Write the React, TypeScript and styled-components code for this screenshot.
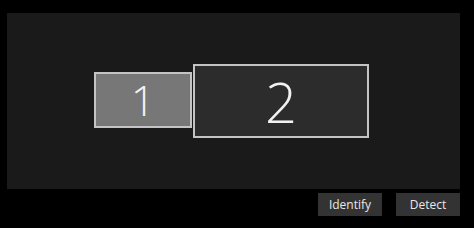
import React from 'react';
import styled, { createGlobalStyle } from 'styled-components';

const GlobalStyle = createGlobalStyle`
  html, body {
    margin: 0;
    padding: 0;
    background: #000;
  }
  body {
    font-family: 'Open Sans', 'Noto Sans', sans-serif;
    color: #fff;
  }
`;

const Page = styled.div`
  width: 474px;
  height: 228px;
  padding: 13px 0 0 7px;
  box-sizing: border-box;
  display: flex;
  flex-direction: column;
`;

const Arrangement = styled.div`
  width: 453px;
  height: 176px;
  background: #1a1a1a;
  display: flex;
  align-items: center;
  justify-content: center;
  gap: 1px;
  padding: 0 4px 1px 0;
  box-sizing: border-box;
`;

const Monitor = styled.div<{ $w: number; $h: number; $active?: boolean; $size: number }>`
  width: ${p => p.$w}px;
  height: ${p => p.$h}px;
  box-sizing: border-box;
  border: 2px solid #c4c4c4;
  background: ${p => (p.$active ? '#777777' : '#2c2c2c')};
  margin-bottom: ${p => (p.$active ? 2 : 0)}px;
  display: flex;
  align-items: center;
  justify-content: center;
  font-family: 'Open Sans', sans-serif;
  font-weight: 300;
  font-size: ${p => p.$size}px;
  line-height: 1;
  color: #f2f2f2;
`;

const ButtonRow = styled.div`
  width: 453px;
  display: flex;
  justify-content: flex-end;
  gap: 14px;
  margin-top: 4px;
`;

const Button = styled.button`
  width: 64px;
  height: 23px;
  border: none;
  background: #333333;
  color: #e8e8e8;
  font-family: 'Open Sans', sans-serif;
  font-size: 12px;
  padding: 0;
  cursor: pointer;
`;

export default function App() {
  return (
    <>
      <GlobalStyle />
      <Page>
        <Arrangement>
          <Monitor $w={98} $h={56} $active $size={43}>1</Monitor>
          <Monitor $w={176} $h={74} $size={56}>2</Monitor>
        </Arrangement>
        <ButtonRow>
          <Button>Identify</Button>
          <Button>Detect</Button>
        </ButtonRow>
      </Page>
    </>
  );
}
